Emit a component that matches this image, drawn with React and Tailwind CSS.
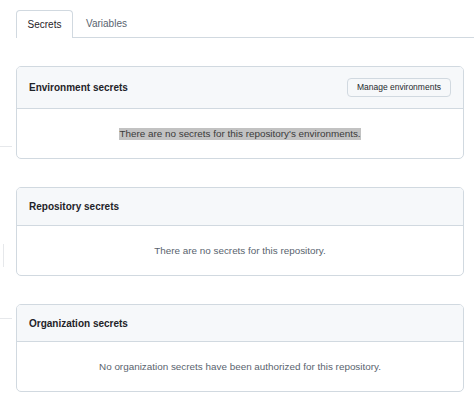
const sections = [
  {
    title: 'Environment secrets',
    empty: "There are no secrets for this repository's environments.",
    action: 'Manage environments',
    selected: true,
    head: 'h-[42px]',
  },
  {
    title: 'Repository secrets',
    empty: 'There are no secrets for this repository.',
    head: 'h-[38px]',
  },
  {
    title: 'Organization secrets',
    empty: 'No organization secrets have been authorized for this repository.',
    head: 'h-[37px]',
  },
]

function SecretBox({ title, empty, action, selected, head }) {
  return (
    <div className="border border-[#d1d9e0] rounded-[5px] overflow-hidden">
      <div className={'flex items-center justify-between bg-[#f6f8fa] border-b border-[#d1d9e0] px-[12px] ' + head}>
        <h3 className="text-[10px] font-bold text-[#1f2328]">{title}</h3>
        {action && (
          <button className="h-[19px] px-[9px] text-[8.5px] text-[#25292e] bg-[#f6f8fa] border border-[#d1d9e0] rounded-[4px]">
            {action}
          </button>
        )}
      </div>
      <div className="h-[49px] flex items-center justify-center">
        <p
          className={
            'text-[9.9px] leading-[12px] ' +
            (selected ? 'bg-[#c2c2c2] text-[#3a3a3a]' : 'text-[#59636e]')
          }
        >
          {empty}
        </p>
      </div>
    </div>
  )
}

export default function App() {
  return (
    <div
      className="relative w-full h-[408px] bg-white overflow-hidden"
      style={{ fontFamily: '"Liberation Sans", Arial, sans-serif' }}
    >
      {/* faint edges of the sidebar behind */}
      <div className="absolute left-0 top-[146px] w-[12px] h-px bg-[#e6e8eb]" />
      <div className="absolute left-[3px] top-[244px] w-px h-[23px] bg-[#e6e8eb]" />
      <div className="absolute left-0 top-[318px] w-[12px] h-px bg-[#e6e8eb]" />

      <div className="flex pt-[10px] pl-4">
        <div className="w-[57px] h-[28px] flex items-center justify-center border border-b-0 border-[#d1d9e0] rounded-t-[4px] text-[10px] text-[#1f2328]">
          Secrets
        </div>
        <div className="flex-1 h-[28px] flex items-center pl-[13px] border-b border-[#d1d9e0] text-[10px] text-[#59636e]">
          Variables
        </div>
      </div>

      <div className="flex flex-col gap-[28px] pl-4 pr-[10px] mt-[28px]">
        {sections.map(s => (
          <SecretBox key={s.title} {...s} />
        ))}
      </div>
    </div>
  )
}
